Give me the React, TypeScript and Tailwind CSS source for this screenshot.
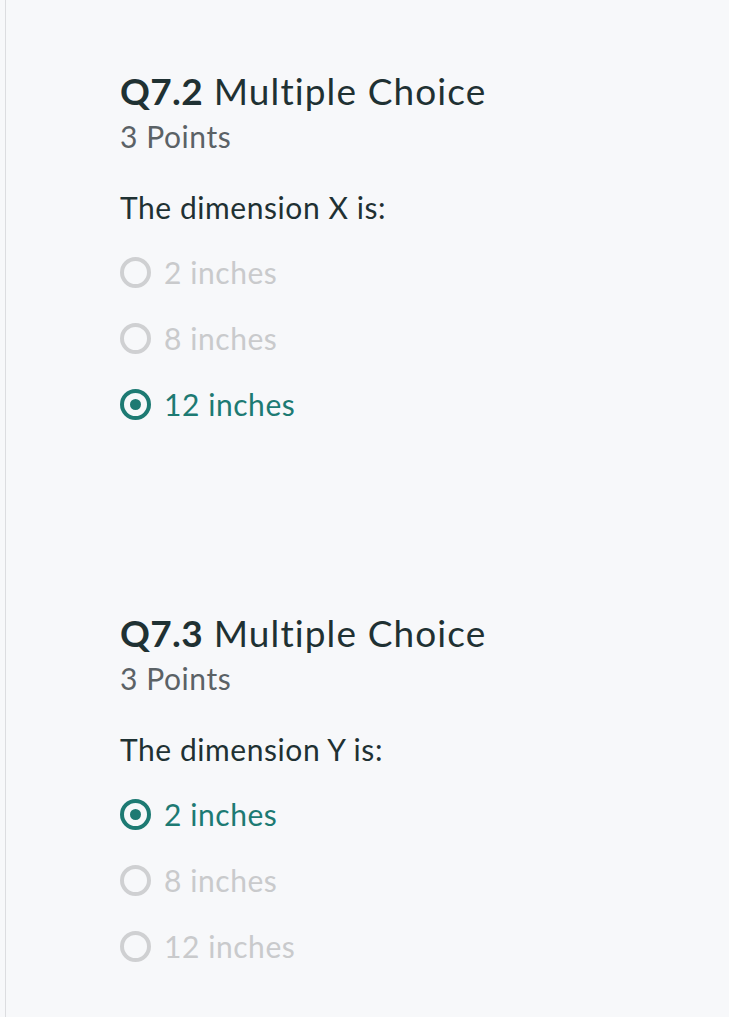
import React from "react";

interface Question { num: string; prompt: string; options: string[]; selected: number; }

const questions: Question[] = [
  { num: "Q7.2", prompt: "The dimension X is:", options: ["2 inches", "8 inches", "12 inches"], selected: 2 },
  { num: "Q7.3", prompt: "The dimension Y is:", options: ["2 inches", "8 inches", "12 inches"], selected: 0 },
];

function Radio({ checked }: { checked: boolean }) {
  return checked ? (
    <span className="w-[31px] h-[31px] rounded-full border-[4px] border-[#1d7a73] flex items-center justify-center shrink-0">
      <span className="w-[11px] h-[11px] rounded-full bg-[#1d7a73]" />
    </span>
  ) : (
    <span className="w-[31px] h-[31px] rounded-full border-[4px] border-[#cfd0d2] shrink-0" />
  );
}

export default function App() {
  return (
    <div className="min-h-screen bg-[#f7f8fa] font-['Lato',sans-serif] tracking-[0.035em]">
      <div className="ml-[5px] min-h-screen border-l border-[#dcdde0] pl-[114px] pt-[67px]">
        {questions.map((q, qi) => (
          <div key={q.num} className={qi > 0 ? "mt-[186px]" : ""}>
            <div className="text-[37px] leading-[48px] tracking-[0.03em] text-[#1f3133]">
              <span className="font-bold tracking-[0.01em]">{q.num}</span> Multiple Choice
            </div>
            <div className="mt-[2px] text-[30px] leading-[38px] text-[#5b6266]">3 Points</div>
            <div className="mt-[33px] text-[30px] leading-[38px] text-[#1f3133]">{q.prompt}</div>
            <div className="mt-[27px] flex flex-col gap-[28px]">
              {q.options.map((o, i) => (
                <label key={o} className="flex items-center gap-[13px]">
                  <Radio checked={i === q.selected} />
                  <span className={`text-[30px] leading-[38px] ${i === q.selected ? "text-[#1d7a73]" : "text-[#c9cacc]"}`}>{o}</span>
                </label>
              ))}
            </div>
          </div>
        ))}
      </div>
    </div>
  );
}
